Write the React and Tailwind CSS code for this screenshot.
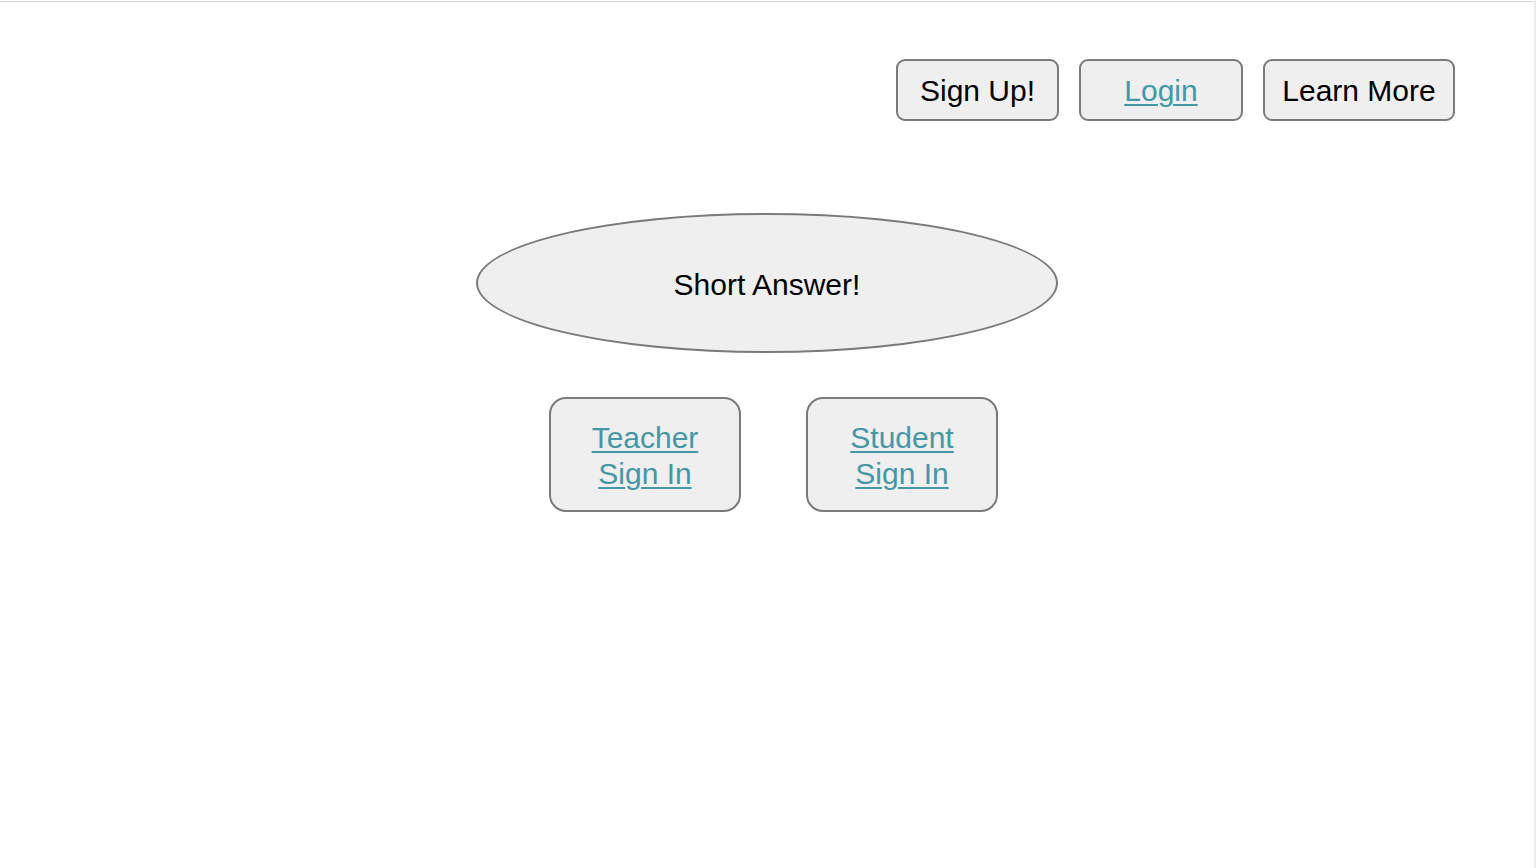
export default function App() {
  const btn =
    "h-[62px] rounded-[9px] border-2 border-[#7a7a7a] bg-[#efefef] flex items-center justify-center pt-[2px] text-[30px] leading-none";
  const box =
    "w-[192px] h-[115px] rounded-[17px] border-2 border-[#7a7a7a] bg-[#efefef] flex items-center justify-center pt-[2px] text-center text-[30px] leading-[36px] text-[#4597a6]";
  return (
    <div className="h-[868px] w-[1536px] bg-white flex font-['Liberation_Sans',Arial,sans-serif] text-black overflow-hidden">
      <div className="flex-1 flex flex-col">
        <div className="mt-px h-px bg-[#d8d8d8]" />
        <div className="flex justify-end gap-5 pr-[79px] mt-[57px]">
          <div className={btn + " w-[163px]"}>Sign Up!</div>
          <div className={btn + " w-[164px]"}>
            <a href="#" className="text-[#4597a6] underline decoration-2 underline-offset-[3px]">
              Login
            </a>
          </div>
          <div className={btn + " w-[192px]"}>Learn More</div>
        </div>
        <div className="mt-[92px] ml-[476px] w-[582px] h-[140px] rounded-[50%] border-2 border-[#7a7a7a] bg-[#efefef] flex items-center justify-center pt-[2px] text-[30px]">
          Short Answer!
        </div>
        <div className="mt-[44px] ml-[549px] flex gap-[65px]">
          <div className={box}>
            <a href="#" className="underline decoration-2 underline-offset-[3px]">
              Teacher
              <br />
              Sign In
            </a>
          </div>
          <div className={box}>
            <a href="#" className="underline decoration-2 underline-offset-[3px]">
              Student
              <br />
              Sign In
            </a>
          </div>
        </div>
      </div>
      <div className="w-[2px] bg-[#ececec]" />
    </div>
  );
}
